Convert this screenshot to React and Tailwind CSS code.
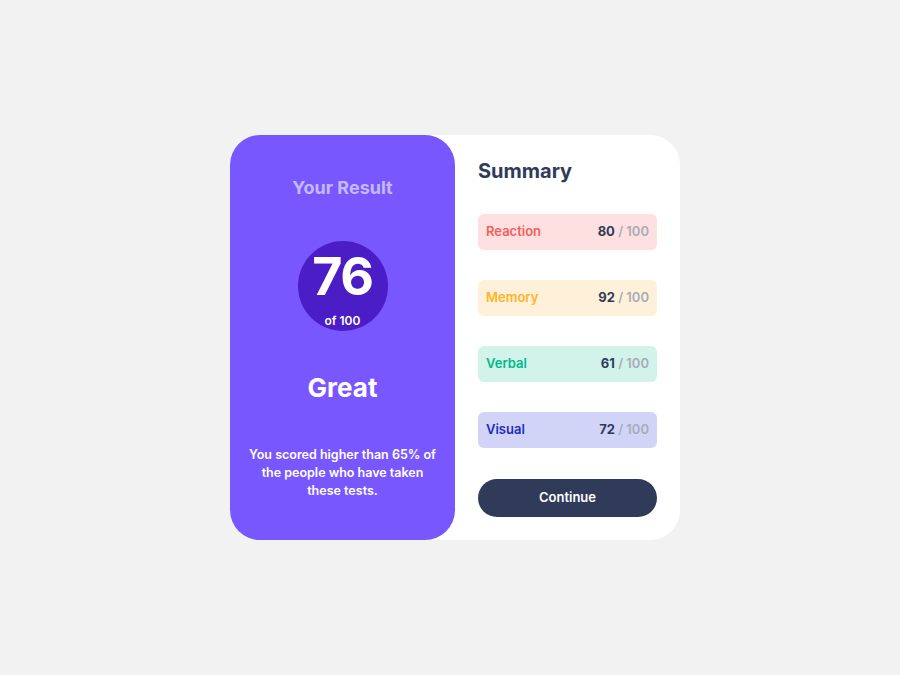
import React from "react";

const rows = [
  { label: "Reaction", score: 80, bg: "bg-[#ffe0e0]", text: "text-[#f55e5e]" },
  { label: "Memory", score: 92, bg: "bg-[#fff1d9]", text: "text-[#ffb424]" },
  { label: "Verbal", score: 61, bg: "bg-[#d1f3ea]", text: "text-[#00b98c]" },
  { label: "Visual", score: 72, bg: "bg-[#d2d4f7]", text: "text-[#1b2bc7]" },
];

export default function App() {
  return (
    <div
      className="min-h-screen flex items-center justify-center bg-[#f2f2f2] pl-[10px]"
      style={{ fontFamily: "Inter, 'Noto Sans', sans-serif" }}
    >
      <div className="w-[450px] h-[405px] flex bg-white rounded-[30px]">
        {/* result panel */}
        <div className="w-[225px] h-full bg-[#7857ff] rounded-[30px] flex flex-col items-center pt-[41px]">
          <h2 className="text-[18px] leading-[24px] font-bold text-[#c6b9ff]">Your Result</h2>
          <div className="mt-[41px] w-[90px] h-[90px] rounded-full bg-[#4a1dc7] flex flex-col items-center pt-[9px] text-white">
            <div className="text-[52px] leading-[54px] font-bold tracking-tight">76</div>
            <div className="mt-[10px] text-[12px] leading-[14px] font-semibold">of 100</div>
          </div>
          <div className="mt-[41px] text-[26px] leading-[32px] font-bold text-white">Great</div>
          <p className="mt-[42px] px-[18px] text-center text-[12.5px] leading-[18px] font-semibold text-white">
            You scored higher than 65% of the people who have taken these tests.
          </p>
        </div>

        {/* summary panel */}
        <div className="flex-1 pl-[23px] pr-[23px] pt-[22px]">
          <h2 className="text-[20px] leading-[28px] font-bold text-[#303b5a]">Summary</h2>
          <div className="mt-[29px] flex flex-col gap-[30px]">
            {rows.map((r) => (
              <div
                key={r.label}
                className={`h-[36px] rounded-[6px] flex items-center justify-between px-[8px] text-[13px] font-semibold ${r.bg}`}
              >
                <span className={r.text}>{r.label}</span>
                <span>
                  <span className="text-[#303b5a] font-bold">{r.score}</span>
                  <span className="text-[#a8acb8]"> / 100</span>
                </span>
              </div>
            ))}
          </div>
          <button className="mt-[31px] w-full h-[38px] rounded-full bg-[#303b59] text-white text-[13px] font-semibold">
            Continue
          </button>
        </div>
      </div>
    </div>
  );
}
